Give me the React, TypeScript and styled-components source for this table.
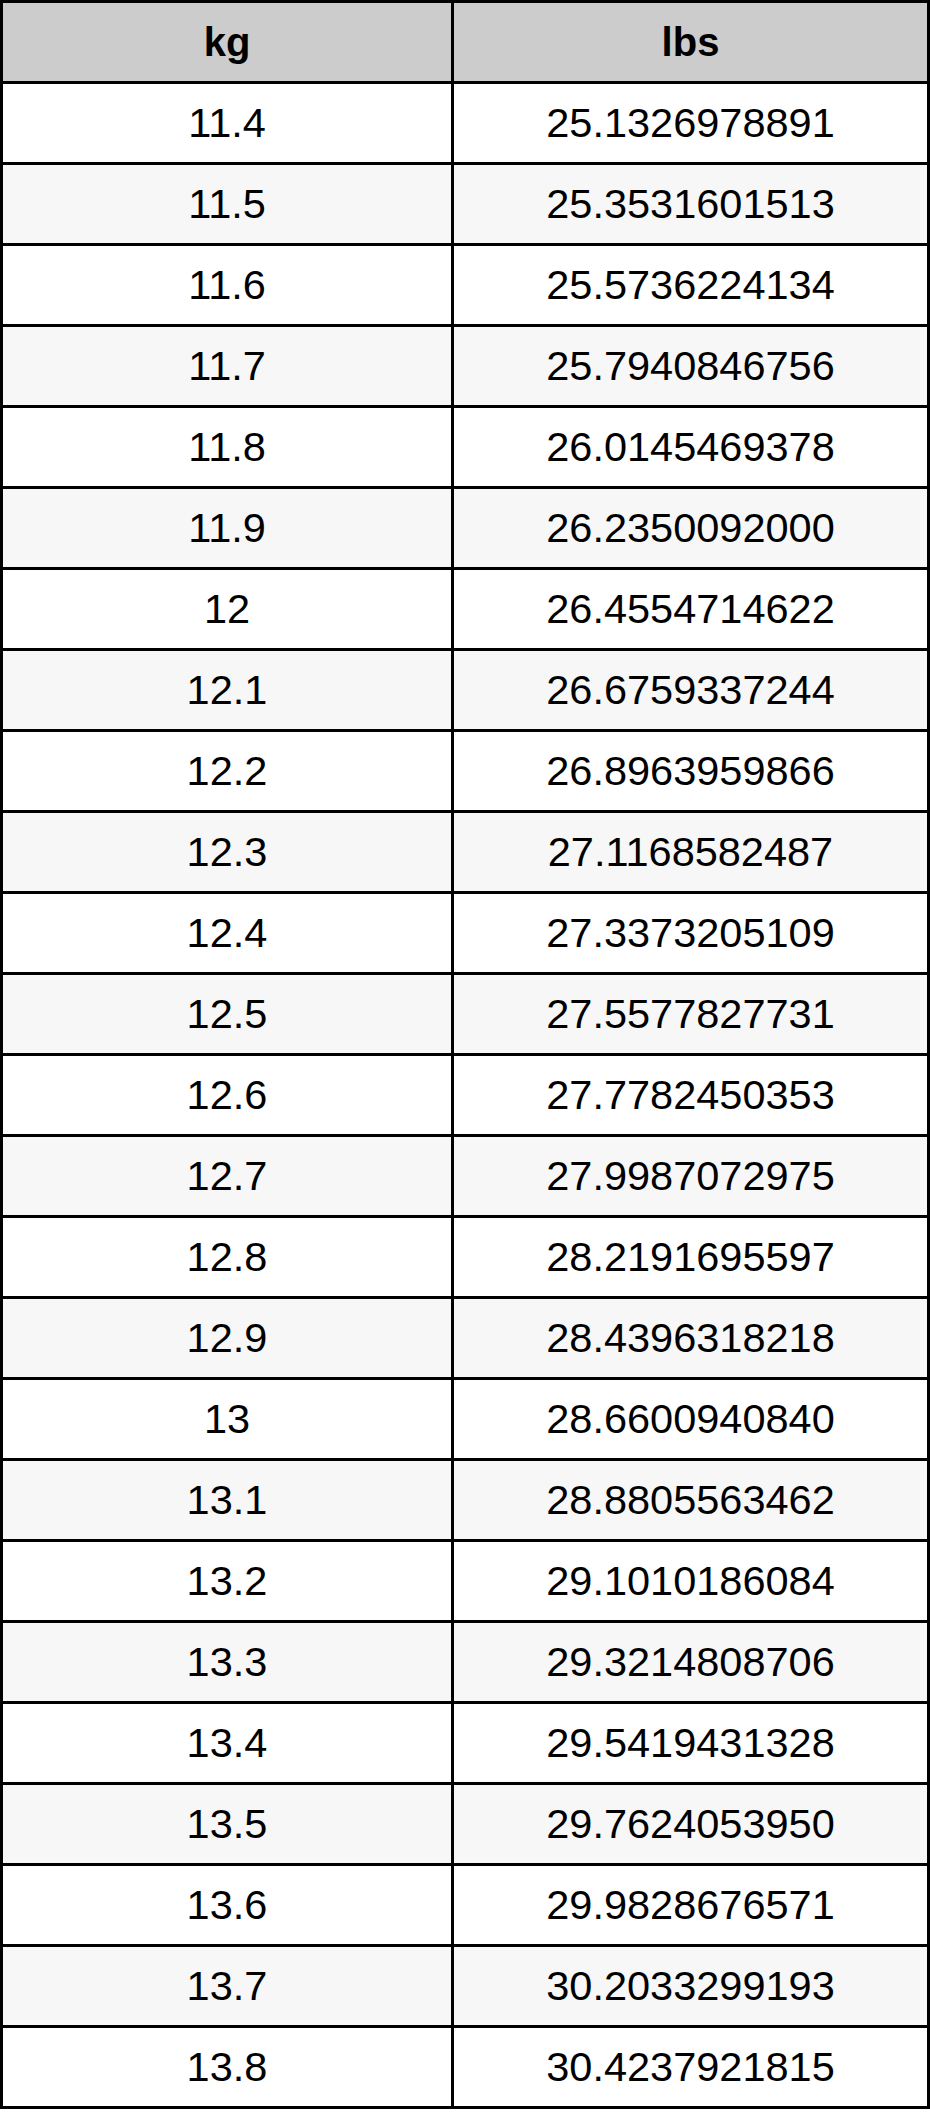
import React from 'react';
import styled, { createGlobalStyle } from 'styled-components';

const GlobalStyle = createGlobalStyle`
  html, body {
    margin: 0;
    padding: 0;
    background: #ffffff;
  }
  body {
    font-family: "Liberation Sans", Arial, sans-serif;
    color: #000000;
  }
`;

const Table = styled.table`
  width: 930px;
  border-collapse: separate;
  border-spacing: 3px;
  background-color: #000000;
  table-layout: fixed;
`;

const HeaderCell = styled.th`
  height: 78px;
  padding: 0;
  background-color: #cccccc;
  font-size: 40px;
  font-weight: 700;
  text-align: center;
  vertical-align: middle;
`;

const Row = styled.tr<{ $alt: boolean }>`
  background-color: ${props => (props.$alt ? '#f7f7f7' : '#ffffff')};
`;

const Cell = styled.td`
  height: 78px;
  padding: 0;
  font-size: 41.5px;
  text-align: center;
  vertical-align: middle;
`;

const rows: [string, string][] = [
  ['11.4', '25.1326978891'],
  ['11.5', '25.3531601513'],
  ['11.6', '25.5736224134'],
  ['11.7', '25.7940846756'],
  ['11.8', '26.0145469378'],
  ['11.9', '26.2350092000'],
  ['12', '26.4554714622'],
  ['12.1', '26.6759337244'],
  ['12.2', '26.8963959866'],
  ['12.3', '27.1168582487'],
  ['12.4', '27.3373205109'],
  ['12.5', '27.5577827731'],
  ['12.6', '27.7782450353'],
  ['12.7', '27.9987072975'],
  ['12.8', '28.2191695597'],
  ['12.9', '28.4396318218'],
  ['13', '28.6600940840'],
  ['13.1', '28.8805563462'],
  ['13.2', '29.1010186084'],
  ['13.3', '29.3214808706'],
  ['13.4', '29.5419431328'],
  ['13.5', '29.7624053950'],
  ['13.6', '29.9828676571'],
  ['13.7', '30.2033299193'],
  ['13.8', '30.4237921815'],
];

const App: React.FC = () => {
  return (
    <>
      <GlobalStyle />
      <Table>
        <colgroup>
          <col style={{ width: '448px' }} />
          <col />
        </colgroup>
        <thead>
          <tr>
            <HeaderCell>kg</HeaderCell>
            <HeaderCell>lbs</HeaderCell>
          </tr>
        </thead>
        <tbody>
          {rows.map(([kg, lbs], i) => (
            <Row key={kg} $alt={i % 2 === 1}>
              <Cell>{kg}</Cell>
              <Cell>{lbs}</Cell>
            </Row>
          ))}
        </tbody>
      </Table>
    </>
  );
};

export default App;
